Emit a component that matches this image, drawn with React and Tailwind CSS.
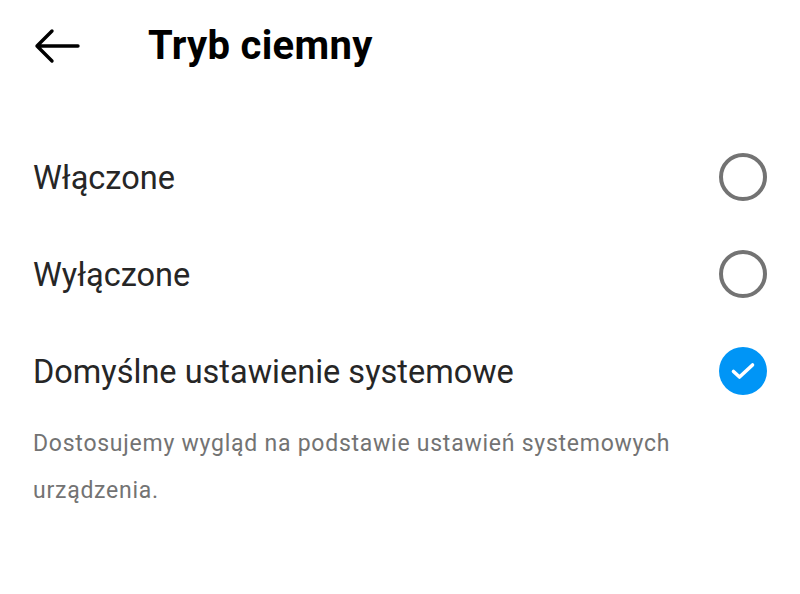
import React from 'react';

const options = [
    { label: 'Włączone', checked: false },
    { label: 'Wyłączone', checked: false },
    { label: 'Domyślne ustawienie systemowe', checked: true },
];

const Radio = ({ checked }) =>
    checked ? (
        <div className="w-[48px] h-[48px] rounded-full bg-[#0095f6] flex items-center justify-center">
            <svg width="28" height="28" viewBox="0 0 28 28" fill="none">
                <path d="M4.5 14.5l6 5.5L23.5 8" stroke="white" strokeWidth="3.6" strokeLinecap="round" strokeLinejoin="round" />
            </svg>
        </div>
    ) : (
        <div className="w-[48px] h-[48px] rounded-full border-[4px] border-[#737373]" />
    );

const App = () => {
    return (
        <div className="w-[800px] h-[594px] bg-white text-black" style={{ fontFamily: 'Roboto, sans-serif' }}>
            <div className="flex items-center h-[92px]">
                <div className="w-[148px] pl-[34px] flex items-center">
                    <svg width="46" height="36" viewBox="0 0 46 36" fill="none">
                        <path d="M44 18H3M18 3L3 18l15 15" stroke="black" strokeWidth="3.4" strokeLinecap="round" strokeLinejoin="round" />
                    </svg>
                </div>
                <h1 className="text-[40px] font-bold tracking-[0.3px]">Tryb ciemny</h1>
            </div>
            <div className="pt-[36px]">
                {options.map((opt) => (
                    <div key={opt.label} className="flex items-center justify-between h-[97px] pl-[33px] pr-[33px]">
                        <span className="text-[32.5px] text-[#262626] pt-[3px]">{opt.label}</span>
                        <Radio checked={opt.checked} />
                    </div>
                ))}
            </div>
            <p className="px-[33px] mt-[1px] text-[23px] tracking-[0.75px] leading-[47px] text-[#737373] max-w-[720px]">
                Dostosujemy wygląd na podstawie ustawień systemowych urządzenia.
            </p>
        </div>
    );
};

export default App;
